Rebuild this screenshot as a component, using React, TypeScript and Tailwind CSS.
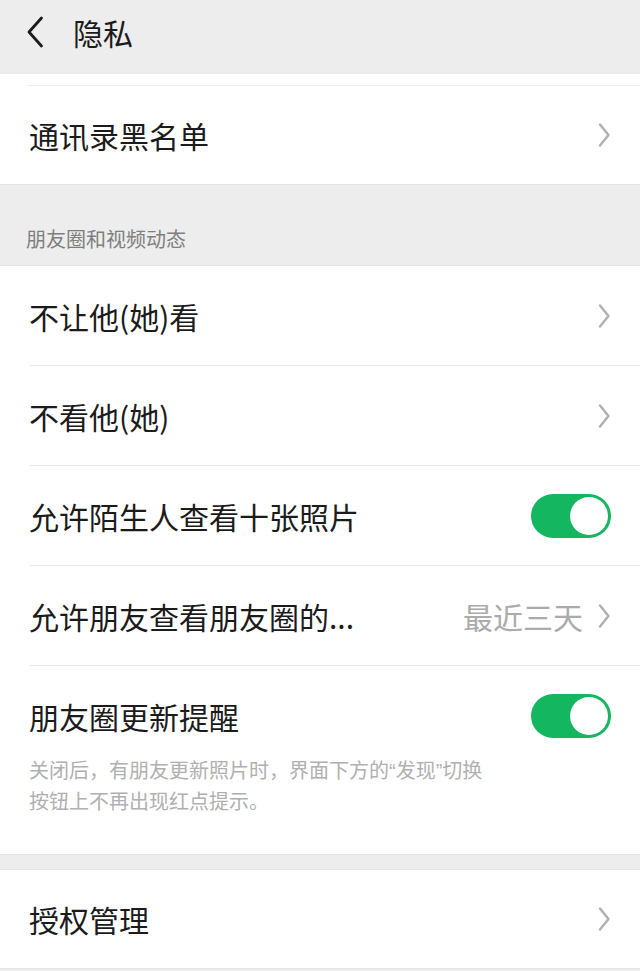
import React from "react";

const font = { fontFamily: '"Noto Sans CJK SC", "Noto Sans", sans-serif' };
const latin = { fontFamily: '"Liberation Sans", sans-serif' };

function Chevron() {
  return (
    <svg width="14" height="26" viewBox="0 0 14 26" fill="none">
      <path d="M3 2.5 L11.5 13 L3 23.5" stroke="#b0b0b0" strokeWidth="2.4" strokeLinecap="round" strokeLinejoin="round" />
    </svg>
  );
}

function Toggle() {
  return (
    <div className="w-[80px] h-[44px] rounded-full bg-[#14b660] flex items-center justify-end pr-[3px]">
      <div className="w-[38px] h-[38px] rounded-full bg-white" />
    </div>
  );
}

function Row({ label, right, last }: { label: string; right?: React.ReactNode; last?: boolean }) {
  return (
    <div className="bg-white">
      <div className="h-[99px] flex items-center justify-between pl-[29px] pr-[29px]">
        <span className="text-[30px] leading-[40px] text-[#1b1b1b]">{label}</span>
        {right}
      </div>
      {!last && <div className="ml-[30px] h-px bg-[#e6e6e6]" />}
    </div>
  );
}

export default function App() {
  return (
    <div className="w-[640px] h-[971px] bg-[#ededed] overflow-hidden" style={font}>
      <div className="h-[74px] flex items-center pl-[26px] pb-[10px]">
        <svg width="18" height="32" viewBox="0 0 18 32" fill="none">
          <path d="M15.5 2 L3 16 L15.5 30" stroke="#1b1b1b" strokeWidth="2.8" strokeLinecap="round" strokeLinejoin="round" />
        </svg>
        <span className="ml-[29px] text-[30px] leading-[40px] text-[#1b1b1b]">隐私</span>
      </div>

      <div className="bg-white">
        <div className="h-[11px]" />
        <div className="ml-[28px] h-px bg-[#ececec]" />
        <div className="h-[98px] flex items-center justify-between pl-[29px] pr-[29px]">
          <span className="text-[30px] leading-[40px] text-[#1b1b1b]">通讯录黑名单</span>
          <Chevron />
        </div>
      </div>
      <div className="h-px bg-[#e3e3e3]" />

      <div className="h-[80px] flex items-end pl-[26px] pb-[12px]">
        <span className="text-[20px] leading-[28px] text-[#7f7f7f]">朋友圈和视频动态</span>
      </div>
      <div className="h-px bg-[#e3e3e3]" />

      <Row label="不让他(她)看" right={<Chevron />} />
      <Row label="不看他(她)" right={<Chevron />} />
      <Row label="允许陌生人查看十张照片" right={<Toggle />} />
      <Row
        label="允许朋友查看朋友圈的..."
        right={
          <div className="flex items-center gap-[14px]">
            <span className="text-[30px] leading-[40px] text-[#ababab]">最近三天</span>
            <Chevron />
          </div>
        }
      />

      <div className="bg-white pt-[28px] pb-[38px] pl-[29px] pr-[29px]">
        <div className="h-[44px] flex items-center justify-between">
          <span className="text-[30px] leading-[40px] text-[#1b1b1b]">朋友圈更新提醒</span>
          <Toggle />
        </div>
        <div className="mt-[17px] text-[20px] leading-[30px] text-[#b0b0b0]">
          关闭后，有朋友更新照片时，界面下方的<span style={latin}>“</span>发现<span style={latin}>”</span>切换
          <br />
          按钮上不再出现红点提示。
        </div>
      </div>
      <div className="h-px bg-[#e3e3e3]" />
      <div className="h-[14px]" />
      <div className="h-px bg-[#e3e3e3]" />

      <div className="bg-white h-[98px] flex items-center justify-between pl-[29px] pr-[29px]">
        <span className="text-[30px] leading-[40px] text-[#1b1b1b]">授权管理</span>
        <Chevron />
      </div>
      <div className="h-px bg-[#e3e3e3]" />
    </div>
  );
}
